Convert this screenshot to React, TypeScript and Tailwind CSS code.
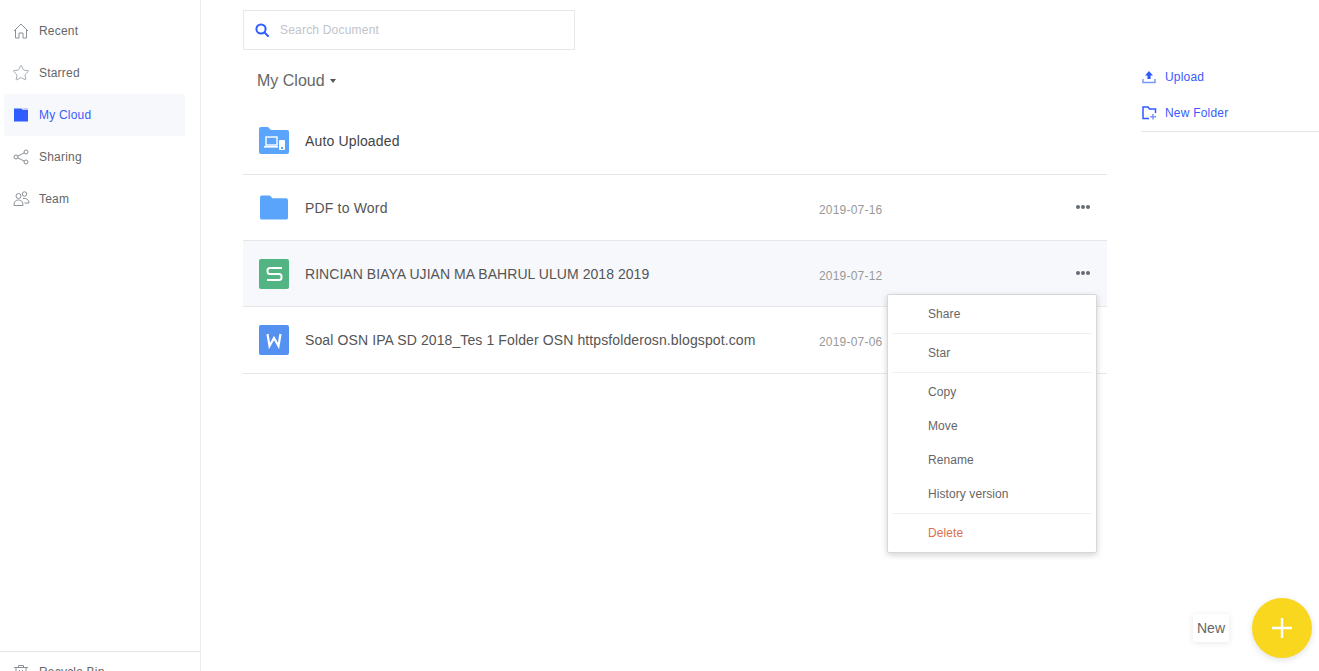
import React from 'react';
import { Star } from 'lucide-react';

const HomeIcon = () => (
  <svg width="16" height="16" viewBox="0 0 16 16" fill="none" stroke="#8a9199" strokeWidth="1">
    <path d="M1 8 L8 1 L15 8 M2.5 7 V15 H6 V10 H10 V15 H13.5 V7" />
  </svg>
);

const FolderSolid = () => (
  <svg width="16" height="16" viewBox="0 0 16 16">
    <path d="M1 1.5 H8.5 L10 3 H15 V14.5 H1 Z" fill="#2f5bff" />
    <path d="M9.5 1.5 H15 V2.5 H10.5 Z" fill="#2f5bff" opacity="0.55" />
  </svg>
);

const ShareIcon = () => (
  <svg width="16" height="16" viewBox="0 0 16 16" fill="none" stroke="#8a9199" strokeWidth="1">
    <circle cx="3" cy="8" r="2" />
    <circle cx="13" cy="3" r="2" />
    <circle cx="13" cy="13" r="2" />
    <path d="M4.8 7.1 L11.2 3.9 M4.8 8.9 L11.2 12.1" />
  </svg>
);

const TeamIcon = () => (
  <svg width="17" height="16" viewBox="0 0 17 16" fill="none" stroke="#8a9199" strokeWidth="1">
    <circle cx="5.5" cy="5" r="2.5" />
    <circle cx="11.5" cy="3" r="2.2" />
    <path d="M1 14.5 C1 10.5 3 9 5.5 9 C8 9 10 10.5 10 14.5 Z" />
    <path d="M10 7.5 C13 7 16 8.5 16 12 H11.5" />
  </svg>
);

const TrashIcon = () => (
  <svg width="16" height="16" viewBox="0 0 16 16" fill="none" stroke="#8a9199" strokeWidth="1">
    <path d="M1 3.5 H15 M5.5 3.5 V1.5 H10.5 V3.5 M3 3.5 V15 H13 V3.5 M6.5 6 V12 M9.5 6 V12" />
  </svg>
);

const SearchIcon = () => (
  <svg width="14" height="14" viewBox="0 0 14 14" fill="none" stroke="#2f5bff" strokeWidth="2">
    <circle cx="6" cy="6" r="4.6" />
    <path d="M9.4 9.4 L13 13" strokeLinecap="round" />
  </svg>
);

const UploadIcon = () => (
  <svg width="14" height="14" viewBox="0 0 14 14">
    <path d="M7 1 L11 5.5 H8.6 V9 H5.4 V5.5 H3 Z" fill="#2f5bff" />
    <path d="M1 9 V12.5 H13 V9" fill="none" stroke="#7b97ff" strokeWidth="1.5" />
  </svg>
);

const NewFolderIcon = () => (
  <svg width="15" height="14" viewBox="0 0 15 14" fill="none">
    <path d="M7 12.5 H1 V1 H6 L7.5 3 H13.5 V7" stroke="#2f5bff" strokeWidth="1.5" />
    <path d="M11 8 V13.5 M8.2 10.8 H14" stroke="#7b97ff" strokeWidth="1.5" />
  </svg>
);

const AutoFolderIcon = () => (
  <svg width="30" height="27" viewBox="0 0 30 27">
    <path d="M0 2 Q0 0 2 0 H9 L12 3 H28 Q30 3 30 5 V25 Q30 27 28 27 H2 Q0 27 0 25 Z" fill="#5aa5fb" />
    <rect x="7" y="10" width="11" height="8" fill="none" stroke="#fff" strokeWidth="1.4" />
    <rect x="5" y="19" width="14" height="1.6" fill="#fff" />
    <rect x="20" y="13" width="6" height="10" rx="1" fill="#fff" />
    <rect x="22" y="20" width="2" height="2" fill="#5aa5fb" />
  </svg>
);

const FolderIcon = () => (
  <svg className="ml-[1px]" width="28" height="25" viewBox="0 0 29 25">
    <path d="M0 2 Q0 0 2 0 H10 L13 3 H27 Q29 3 29 5 V23 Q29 25 27 25 H2 Q0 25 0 23 Z" fill="#5aa5fb" />
  </svg>
);

const SheetIcon = () => (
  <svg width="30" height="30" viewBox="0 0 30 30">
    <rect width="30" height="30" rx="2" fill="#52b483" />
    <path d="M23 9 H11 Q8.5 9 8.5 11.5 V12.5 Q8.5 15 11 15 H20 Q22.5 15 22.5 17.5 V18.5 Q22.5 21 20 21 H8" fill="none" stroke="#fff" strokeWidth="2" />
  </svg>
);

const WordIcon = () => (
  <svg width="30" height="30" viewBox="0 0 30 30">
    <rect width="30" height="30" rx="2" fill="#5591f0" />
    <path d="M8.5 9 L10.5 21 L15 13 L19.5 21 L21.5 9" fill="none" stroke="#fff" strokeWidth="2.2" />
  </svg>
);

const Dots = () => (
  <div className="flex gap-[1px]">
    <span className="w-[4px] h-[4px] rounded-full bg-[#666b75]" />
    <span className="w-[4px] h-[4px] rounded-full bg-[#666b75]" />
    <span className="w-[4px] h-[4px] rounded-full bg-[#666b75]" />
  </div>
);

const NAV = [
  { label: 'Recent', icon: <HomeIcon /> },
  { label: 'Starred', icon: <Star size={18} strokeWidth={1} color="#8a9199" className="-ml-[1px]" /> },
  { label: 'My Cloud', icon: <FolderSolid />, active: true },
  { label: 'Sharing', icon: <ShareIcon /> },
  { label: 'Team', icon: <TeamIcon /> },
];

const FILES = [
  { name: 'Auto Uploaded', icon: <AutoFolderIcon />, row: 'h-[67px] pb-[1px]', text: 'text-[#444] tracking-[0.15px]' },
  { name: 'PDF to Word', date: '2019-07-16', icon: <FolderIcon />, row: 'h-[66px]', text: 'text-[#555] tracking-[0.18px]' },
  { name: 'RINCIAN BIAYA UJIAN MA BAHRUL ULUM 2018 2019', date: '2019-07-12', icon: <SheetIcon />, row: 'h-[66px] bg-[#f7f8fc]', text: 'text-[#555] tracking-[0.05px]', menu: true },
  { name: 'Soal OSN IPA SD 2018_Tes 1 Folder OSN httpsfolderosn.blogspot.com', date: '2019-07-06', icon: <WordIcon />, row: 'h-[67px] pb-[1px]', text: 'text-[#555] tracking-[0.11px]' },
];

const MENU = [
  [{ label: 'Share' }],
  [{ label: 'Star' }],
  [{ label: 'Copy' }, { label: 'Move' }, { label: 'Rename' }, { label: 'History version' }],
  [{ label: 'Delete', danger: true }],
];

const RowMenu = () => (
  <div className="absolute left-[644px] top-[53px] z-10 w-[210px] bg-white rounded-[2px] border border-[#d8d8d8] shadow-[0_2px_6px_rgba(0,0,0,0.18)] px-[4px]">
    {MENU.map((group, i) => (
      <div key={i} className={`py-[2px] ${i < MENU.length - 1 ? 'border-b border-[#f0f0f0]' : ''}`}>
        {group.map(item => (
          <div
            key={item.label}
            className={`h-[34px] pl-[36px] flex items-center text-xs tracking-[0.08px] ${item.danger ? 'text-[#d8714f]' : 'text-[#666]'}`}
          >
            {item.label}
          </div>
        ))}
      </div>
    ))}
  </div>
);

export default function App() {
  return (
    <div className="relative flex h-[671px] overflow-hidden bg-white font-['Liberation_Sans',Arial,sans-serif]">
      {/* Sidebar */}
      <aside className="w-[201px] shrink-0 h-full border-r border-[#ececec] flex flex-col">
        <nav className="flex-1 pt-[10px] pl-[4px] pr-[15px]">
          {NAV.map(item => (
            <div
              key={item.label}
              className={`h-[42px] flex items-center rounded-[2px] pl-[9px] text-xs tracking-[0.2px] ${item.active ? 'bg-[#f7f8fc] text-[#3a5bff]' : 'text-[#666]'}`}
            >
              <span className="w-[26px] flex items-center">{item.icon}</span>
              {item.label}
            </div>
          ))}
        </nav>
        <div className="h-[20px] shrink-0 border-t border-[#e6e6e6] pl-[13px] pt-[12px] flex items-start text-xs tracking-[0.2px] text-[#666]">
          <span className="w-[26px]"><TrashIcon /></span>
          Recycle Bin
        </div>
      </aside>

      {/* Main column */}
      <main className="ml-[42px] w-[864px] shrink-0">
        <div className="mt-[10px] w-[332px] h-[40px] border border-[#e8e8e8] flex items-center pl-[11px]">
          <SearchIcon />
          <span className="ml-[11px] text-xs tracking-[0.2px] text-[#c0c4cc]">Search Document</span>
        </div>

        <div className="mt-[20px] h-[21px] pl-[14px] flex items-center text-base text-[#666]">
          My Cloud
          <span className="ml-[5px] w-0 h-0 border-x-[3.5px] border-x-transparent border-t-[4px] border-t-[#555]" />
        </div>

        <div className="mt-[17px]">
          {FILES.map(file => (
            <div
              key={file.name}
              className={`relative flex items-center border-b border-[#e6e6e6] pl-[16px] ${file.row}`}
            >
              <span className="w-[46px] flex items-center">{file.icon}</span>
              <span className={`w-[514px] text-sm ${file.text}`}>{file.name}</span>
              {file.date && <span className="mt-[5px] text-xs tracking-[0.2px] text-[#999]">{file.date}</span>}
              {file.date && (
                <span className="absolute right-[17px] top-[30px]"><Dots /></span>
              )}
              {file.menu && <RowMenu />}
            </div>
          ))}
        </div>
      </main>

      {/* Right actions */}
      <section className="ml-[34px] flex-1 pt-[59px]">
        <div className="border-b border-[#e6e6e6] text-xs tracking-[0.2px] text-[#3a5bff]">
          <div className="h-[36px] flex items-center">
            <span className="w-[24px] pl-[1px]"><UploadIcon /></span>
            Upload
          </div>
          <div className="h-[36px] flex items-center">
            <span className="w-[24px] pl-[1px]"><NewFolderIcon /></span>
            New Folder
          </div>
        </div>
      </section>

      {/* New button */}
      <div className="absolute right-[7px] bottom-[13px] flex items-center gap-[23px]">
        <span className="w-[36px] h-[28px] flex items-center justify-center bg-white rounded-[2px] shadow-[0_1px_6px_rgba(0,0,0,0.1)] text-sm text-[#666]">New</span>
        <button className="w-[60px] h-[60px] rounded-full bg-[#f9d71f] shadow-[0_2px_6px_rgba(0,0,0,0.12)] flex items-center justify-center">
          <svg width="20" height="20" viewBox="0 0 20 20" stroke="#fff" strokeWidth="2.4">
            <path d="M10 0 V20 M0 10 H20" />
          </svg>
        </button>
      </div>
    </div>
  );
}
